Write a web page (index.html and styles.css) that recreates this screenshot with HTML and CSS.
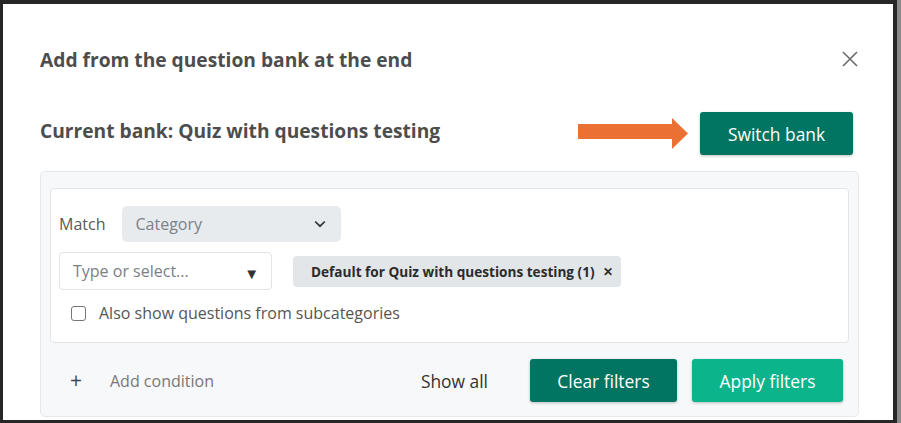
FILE: index.html
```html
<!DOCTYPE html>
<html lang="en">
<head>
    <meta charset="UTF-8">
    <meta name="viewport" content="width=device-width, initial-scale=1.0">
    <title>Add from the question bank</title>
    <link rel="stylesheet" href="styles.css">
</head>
<body>

<div class="frame">
    <div class="modal-header">
        <h5 class="modal-title">Add from the question bank at the end</h5>
        <span class="close-btn">
            <svg width="16" height="16" viewBox="0 0 16 16"><path d="M1 1 L15 15 M15 1 L1 15" stroke="#6b6b6b" stroke-width="1.6" fill="none"/></svg>
        </span>
    </div>

    <div class="bank-row">
        <h5 class="bank-title">Current bank: Quiz with questions testing</h5>
        <div class="bank-actions">
            <svg class="arrow" width="110" height="31" viewBox="0 0 110 31"><rect x="0" y="6" width="95" height="15" fill="#ea7133"/><polygon points="94,0 110,15.5 94,31" fill="#ea7133"/></svg>
            <div class="btn btn-primary btn-switch">Switch bank</div>
        </div>
    </div>

    <div class="filter-box">
        <div class="conditions">
            <div class="row">
                <span class="label">Match</span>
                <div class="select">
                    <span>Category</span>
                    <svg width="12" height="8" viewBox="0 0 12 8"><path d="M1.2 1.5 L6 6.2 L10.8 1.5" stroke="#333" stroke-width="1.7" fill="none"/></svg>
                </div>
            </div>
            <div class="row row-gap">
                <div class="autocomplete">
                    <span>Type or select...</span>
                    <span class="caret">&#9660;</span>
                </div>
                <div class="chip">Default for Quiz with questions testing (1) <span class="chip-x">&#10005;</span></div>
            </div>
            <div class="check-row">
                <span class="checkbox"></span>
                <span>Also show questions from subcategories</span>
            </div>
        </div>

        <div class="footer">
            <span class="plus">+</span>
            <span class="add-condition">Add condition</span>
            <span class="show-all">Show all</span>
            <div class="btn btn-primary btn-clear">Clear filters</div>
            <div class="btn btn-apply">Apply filters</div>
        </div>
    </div>
</div>

</body>
</html>
```

FILE: styles.css
```css
body {
    margin: 0;
    background-color: #8a8a8a;
    font-family: 'Open Sans', 'Noto Sans', sans-serif;
    color: #333;
}
.frame {
    width: 897px;
    height: 423px;
    box-sizing: border-box;
    background: #fff;
    border-top: 4px solid #262626;
    border-left: 3px solid #262626;
    border-right: 4px solid #262626;
    border-bottom: 3px solid #262626;
    padding: 40px 34px 0 37px;
    overflow: hidden;
}
.modal-header {
    display: flex;
    justify-content: space-between;
    align-items: center;
    height: 30px;
}
.modal-title,
.bank-title {
    margin: 0;
    font-size: 19.2px;
    font-weight: 700;
    color: #4d4d4d;
}
.close-btn {
    display: flex;
    margin-right: 1px;
}
.bank-row {
    display: flex;
    justify-content: space-between;
    align-items: center;
    height: 43px;
    margin-top: 38px;
}
.bank-title {
    margin-top: -6px;
}
.bank-actions {
    display: flex;
    align-items: center;
    gap: 12px;
    margin-right: 6px;
}
.btn {
    display: flex;
    align-items: center;
    justify-content: center;
    height: 43px;
    box-sizing: border-box;
    border-radius: 3px;
    color: #fff;
    font-size: 17.4px;
    box-shadow: 0 1px 3px rgba(0, 0, 0, 0.25);
}
.btn-primary {
    background: #017561;
}
.btn-switch {
    width: 153px;
}
.btn-clear {
    width: 147px;
}
.btn-apply {
    width: 151px;
    background: #0cb48b;
}
.filter-box {
    margin-top: 16px;
    background: #f7f8fa;
    border: 1px solid #e6e9ec;
    border-radius: 5px;
    padding: 16px 9px 14px 9px;
}
.conditions {
    background: #fff;
    border: 1px solid #e3e6e9;
    border-radius: 4px;
    padding: 17px 8px 18px 8px;
    font-size: 16px;
}
.row {
    display: flex;
    align-items: center;
}
.row-gap {
    margin-top: 10px;
}
.label {
    color: #5a5a5a;
    margin-right: 17px;
}
.select {
    display: flex;
    align-items: center;
    justify-content: space-between;
    width: 219px;
    height: 36px;
    box-sizing: border-box;
    padding: 0 15px 0 13px;
    background: #e8ebee;
    border-radius: 5px;
    color: #7a8187;
}
.autocomplete {
    display: flex;
    align-items: center;
    justify-content: space-between;
    width: 213px;
    height: 38px;
    box-sizing: border-box;
    padding: 0 12px 0 13px;
    border: 1px solid #e1e4e7;
    border-radius: 4px;
    color: #7a8087;
}
.caret {
    font-size: 15px;
    color: #333;
    margin-top: 3px;
}
.chip {
    display: flex;
    align-items: center;
    height: 31px;
    margin-left: 21px;
    padding: 0 8px 0 18px;
    background: #e3e6e9;
    border-radius: 4px;
    font-size: 13.6px;
    font-weight: 700;
    color: #2b2b2b;
}
.chip-x {
    margin-left: 8px;
    font-size: 12px;
}
.check-row {
    display: flex;
    align-items: center;
    height: 22px;
    margin-top: 12px;
    padding-left: 12px;
    color: #555;
}
.checkbox {
    width: 13px;
    height: 13px;
    border: 1px solid #777;
    border-radius: 3px;
    margin-right: 13px;
}
.footer {
    display: flex;
    align-items: center;
    margin-top: 16px;
    padding: 0 6px 0 20px;
    font-size: 17.4px;
}
.plus {
    font-size: 21px;
    color: #444;
    width: 40px;
    margin-top: -2px;
}
.add-condition {
    color: #777;
    font-size: 16px;
}
.show-all {
    margin-left: auto;
    margin-right: 42px;
    color: #333;
}
.footer .btn + .btn {
    margin-left: 15px;
}
```
